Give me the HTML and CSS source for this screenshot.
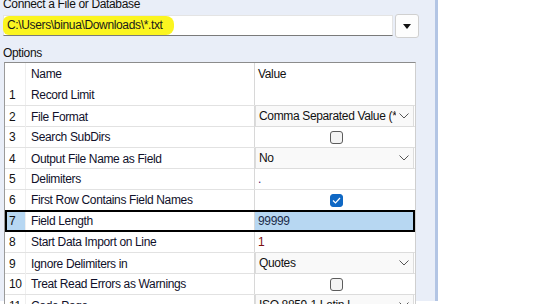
FILE: index.html
```html
<!DOCTYPE html>
<html lang="en">

<head>
    <meta charset="UTF-8">
    <title>Connect a File or Database</title>
    <link rel="stylesheet" href="styles.css">
</head>

<body>
    <div class="panel">
        <div class="panel-label top-label">Connect a File or Database</div>
        <div class="file-row">
            <div class="file-input"><span class="marker">C:\Users\binua\Downloads\*.txt</span></div>
            <button class="drop-btn" type="button">
                <svg width="8" height="5" viewBox="0 0 8 5"><path d="M0 0H8L4 5Z" fill="#111"/></svg>
            </button>
        </div>
        <div class="panel-label options-label">Options</div>

        <div class="grid">
            <div class="row head">
                <div class="num"></div>
                <div class="name">Name</div>
                <div class="value plain">Value</div>
            </div>
            <div class="row first">
                <div class="num">1</div>
                <div class="name">Record Limit</div>
                <div class="value plain"></div>
            </div>
            <div class="row">
                <div class="num">2</div>
                <div class="name">File Format</div>
                <div class="value combo"><span class="combo-text">Comma Separated Value (*.csv)</span>
                    <svg class="chev" width="10" height="6" viewBox="0 0 10 6"><path d="M0.5 0.5L5 5L9.5 0.5" fill="none" stroke="#555" stroke-width="1"/></svg>
                </div>
            </div>
            <div class="row">
                <div class="num">3</div>
                <div class="name">Search SubDirs</div>
                <div class="value check-cell"><span class="box"></span></div>
            </div>
            <div class="row">
                <div class="num">4</div>
                <div class="name">Output File Name as Field</div>
                <div class="value combo"><span class="combo-text">No</span>
                    <svg class="chev" width="10" height="6" viewBox="0 0 10 6"><path d="M0.5 0.5L5 5L9.5 0.5" fill="none" stroke="#555" stroke-width="1"/></svg>
                </div>
            </div>
            <div class="row">
                <div class="num">5</div>
                <div class="name">Delimiters</div>
                <div class="value plain purple">.</div>
            </div>
            <div class="row">
                <div class="num">6</div>
                <div class="name">First Row Contains Field Names</div>
                <div class="value check-cell"><span class="box checked">
                    <svg width="9" height="7" viewBox="0 0 9 7"><path d="M1 3.5L3.5 6L8 1" fill="none" stroke="#fff" stroke-width="1.2"/></svg>
                </span></div>
            </div>
            <div class="row selected">
                <div class="num">7</div>
                <div class="name">Field Length</div>
                <div class="value plain">99999</div>
            </div>
            <div class="row">
                <div class="num">8</div>
                <div class="name">Start Data Import on Line</div>
                <div class="value plain red">1</div>
            </div>
            <div class="row">
                <div class="num">9</div>
                <div class="name">Ignore Delimiters in</div>
                <div class="value combo"><span class="combo-text">Quotes</span>
                    <svg class="chev" width="10" height="6" viewBox="0 0 10 6"><path d="M0.5 0.5L5 5L9.5 0.5" fill="none" stroke="#555" stroke-width="1"/></svg>
                </div>
            </div>
            <div class="row">
                <div class="num">10</div>
                <div class="name">Treat Read Errors as Warnings</div>
                <div class="value check-cell"><span class="box"></span></div>
            </div>
            <div class="row">
                <div class="num">11</div>
                <div class="name">Code Page</div>
                <div class="value combo"><span class="combo-text">ISO 8859-1 Latin I</span>
                    <svg class="chev" width="10" height="6" viewBox="0 0 10 6"><path d="M0.5 0.5L5 5L9.5 0.5" fill="none" stroke="#555" stroke-width="1"/></svg>
                </div>
            </div>
        </div>
    </div>
</body>

</html>
```

FILE: styles.css
```css
/* Reset */
* {
    margin: 0;
    padding: 0;
    box-sizing: border-box;
}

body {
    font-family: 'Liberation Sans', Arial, sans-serif;
    font-size: 12px;
    letter-spacing: -0.35px;
    color: #111;
    background-color: #fff;
    height: 100vh;
    overflow: hidden;
}

/* Left side panel */
.panel {
    width: 438px;
    height: 100vh;
    background-color: #e9eef8;
    border-right: 3px solid #b3c5e4;
    padding-left: 3px;
}

.panel-label {
    height: 14px;
    line-height: 14px;
    color: #111;
}

.top-label {
    margin-top: -3px;
}

/* File path row */
.file-row {
    display: flex;
    align-items: flex-start;
    gap: 2px;
    margin-top: 4px;
}

.file-input {
    width: 390px;
    height: 21px;
    background-color: #fff;
    border: 1px solid #e4e4e4;
    border-bottom: 1px solid #7a7a7a;
    display: flex;
    align-items: center;
}

.marker {
    background-color: #fbf520;
    border-radius: 6px 8px 8px 6px;
    padding: 3px 11px 3px 4px;
    margin-left: -1px;
    line-height: 13px;
    color: #1a1a1a;
}

.drop-btn {
    width: 24px;
    height: 24px;
    margin-top: -1px;
    background-color: #fdfdfd;
    border: 1px solid #d0d0d0;
    border-radius: 3px;
    display: flex;
    align-items: center;
    justify-content: center;
}

.options-label {
    margin-top: 8px;
}

/* Property grid */
.grid {
    width: 412px;
    margin-left: 1px;
    margin-top: 2px;
    background-color: #fff;
    border-top: 1px solid #8c8c8c;
    border-left: 1px solid #9a9a9a;
    border-right: 1px solid #cfcfcf;
}

.row {
    display: grid;
    grid-template-columns: 21px 229px 160px;
    height: 21px;
    border-bottom: 1px solid #e2e2e2;
    position: relative;
}

.row.head {
    height: 22px;
    border-bottom: none;
}

.row > div {
    display: flex;
    align-items: center;
    white-space: nowrap;
    overflow: hidden;
}

.num {
    padding-left: 4px;
    border-right: 1px solid #efefef;
    color: #111;
}

.name {
    padding-left: 5px;
    border-right: 1px solid #d8d8d8;
    color: #10102a;
}

.value {
    padding-left: 3px;
    color: #111;
}

.purple {
    color: #4b1a6e;
}

.red {
    color: #7a1010;
}

/* Dropdown cells */
.value.combo {
    background-color: #f9f9f9;
    border: 1px solid #dcdcdc;
    margin: -1px 1px 0 0;
    height: 22px;
    padding-right: 4px;
    justify-content: space-between;
}

.combo-text {
    overflow: hidden;
    width: 137px;
}

.chev {
    flex-shrink: 0;
}

/* Checkbox cells */
.check-cell {
    justify-content: center;
}

.box {
    width: 13px;
    height: 13px;
    border: 1px solid #5c5c5c;
    border-radius: 3px;
    background-color: #f4f4f4;
    display: flex;
    align-items: center;
    justify-content: center;
    margin-left: -1px;
}

.box.checked {
    background-color: #0f68c4;
    border-color: #0f68c4;
}

/* Selected row */
.row.selected .num,
.row.selected .value {
    background-color: #b7d7f2;
}

.row.selected .value {
    color: #1b2b4a;
}

.row.selected::after {
    content: "";
    position: absolute;
    left: 0;
    right: 0;
    top: -1px;
    bottom: -1px;
    border: 2px solid #000;
    pointer-events: none;
}
```
